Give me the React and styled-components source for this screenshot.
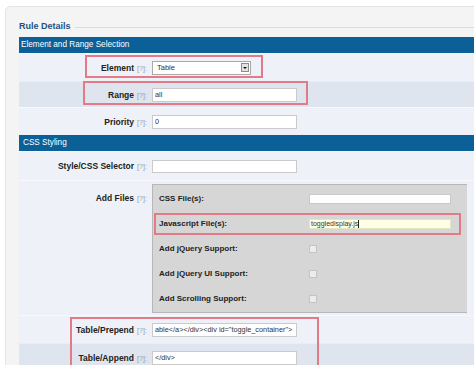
import React from "react"
import styled, { createGlobalStyle } from "styled-components"

const GlobalStyle = createGlobalStyle`
  html, body {
    margin: 0;
    padding: 0;
    background: #fff;
    overflow: hidden;
  }
  body {
    font-family: "Liberation Sans", Arial, sans-serif;
    color: #222;
  }
`

const Panel = styled.div`
  margin: 6px 0 0 5px;
  width: 500px;
  height: 420px;
  box-sizing: border-box;
  background: #f4f4f4;
  border: 1px solid #e4e4e4;
  border-radius: 5px;
  padding: 13px 0 0 13px;
`

const Legend = styled.div`
  display: flex;
  align-items: center;
  height: 12px;
  margin-bottom: 5px;

  span {
    font-size: 9px;
    font-weight: bold;
    color: #1f5282;
    padding-right: 4px;
    white-space: nowrap;
  }

  &::after {
    content: "";
    flex: 1;
    height: 1px;
    background: #dcdcdc;
    margin-top: 2px;
  }
`

const Fieldset = styled.div`
  display: flex;
  flex-direction: column;
`

const SectionHeader = styled.div`
  height: 16px;
  line-height: 16px;
  background: #0b6098;
  color: #fff;
  font-size: 8.2px;
  padding-left: ${p => p.$indent || 3}px;
  white-space: nowrap;
`

const Group = styled.div`
  position: relative;
`

const Row = styled.div`
  position: relative;
  display: grid;
  grid-template-columns: 128px 1fr;
  align-items: ${p => (p.$top ? "start" : "center")};
  height: ${p => p.$h}px;
  background: ${p => (p.$dark ? "#dee5ee" : "#eef2f8")};
  border-top: 1px solid ${p => (p.$dark ? "#e9eef5" : "#f6f8fb")};
  box-sizing: border-box;
`

const Label = styled.div`
  text-align: right;
  font-size: 8.5px;
  font-weight: bold;
  color: #222;
  white-space: nowrap;
  padding-top: ${p => p.$pad || 0}px;
`

const Help = styled.span`
  font-weight: normal;
  font-size: 7.2px;
  color: #9a9a9a;
  margin-left: 3px;
`

const Field = styled.div`
  display: flex;
  align-items: center;
  padding-left: 5px;
  padding-top: ${p => p.$pad || 0}px;
`

const TextInput = styled.input`
  width: ${p => p.$w || 145}px;
  height: ${p => p.$h || 14}px;
  box-sizing: border-box;
  margin: 0;
  padding: 0 2px;
  border: 1px solid #cacaca;
  background: #fff;
  font-family: "Liberation Sans", Arial, sans-serif;
  font-size: 7.3px;
  color: #333;
  outline: none;
`

const Select = styled.div`
  width: 99px;
  height: 14px;
  box-sizing: border-box;
  border: 1px solid #a9a9a9;
  background: #fff;
  display: flex;
  align-items: center;
  justify-content: space-between;
  padding: 0 1px 0 4px;
  font-size: 7.5px;
  color: #333;
`

const SelectButton = styled.div`
  width: 8px;
  height: 9px;
  box-sizing: border-box;
  border: 1px solid #8c8c8c;
  background: #e2e2e2;
  display: flex;
  align-items: center;
  justify-content: center;

  &::after {
    content: "";
    border-left: 2px solid transparent;
    border-right: 2px solid transparent;
    border-top: 2px solid #111;
  }
`

const FilesBox = styled.div`
  margin-top: 3px;
  width: 315px;
  height: 129px;
  box-sizing: border-box;
  background: #d6d6d6;
  border: 1px solid #b7b7b7;
  border-right: none;
  padding-top: 1px;
`

const FileRow = styled.div`
  position: relative;
  display: grid;
  grid-template-columns: 150px 1fr;
  align-items: center;
  height: 25px;
  padding-left: 6px;
`

const FileLabel = styled.div`
  font-size: 8px;
  font-weight: bold;
  color: #222;
  white-space: nowrap;
`

const Checkbox = styled.div`
  width: 8px;
  height: 8px;
  box-sizing: border-box;
  border: 1px solid #c4c4c4;
  background: #ececec;
`

const Highlight = styled.div`
  position: absolute;
  left: ${p => p.$x}px;
  top: ${p => p.$y}px;
  width: ${p => p.$w}px;
  height: ${p => p.$h}px;
  box-sizing: border-box;
  border: 2px solid #e37b86;
  pointer-events: none;
`

const Caret = styled.span`
  display: inline-block;
  width: 1px;
  height: 8px;
  background: #222;
`

const ActiveField = styled.div`
  display: flex;
  align-items: center;
  width: 142px;
  height: 10px;
  box-sizing: border-box;
  border: 1px solid #e4e4c8;
  background: #ffffe3;
  padding-left: 1px;
  font-size: 7px;
  color: #333;
`

const fileRows = [
  { label: "CSS File(s):", kind: "text" },
  { label: "Javascript File(s):", kind: "active" },
  { label: "Add jQuery Support:", kind: "check" },
  { label: "Add jQuery UI Support:", kind: "check" },
  { label: "Add Scrolling Support:", kind: "check" },
]

const HelpLabel = ({ children, pad }) => (
  <Label $pad={pad}>
    {children}
    <Help>[?]:</Help>
  </Label>
)

export default function App() {
  return (
    <>
      <GlobalStyle />
      <Panel>
        <Legend>
          <span>Rule Details</span>
        </Legend>
        <Fieldset>
          <SectionHeader $indent={2}>Element and Range Selection</SectionHeader>
          <Row $h={28}>
            <HelpLabel>Element</HelpLabel>
            <Field>
              <Select>
                Table
                <SelectButton />
              </Select>
            </Field>
            <Highlight $x={66} $y={1} $w={178} $h={23} />
          </Row>
          <Row $h={26} $dark>
            <HelpLabel>Range</HelpLabel>
            <Field>
              <TextInput readOnly value="all" />
            </Field>
            <Highlight $x={64} $y={-1} $w={225} $h={24} />
          </Row>
          <Row $h={28}>
            <HelpLabel>Priority</HelpLabel>
            <Field>
              <TextInput readOnly value="0" />
            </Field>
          </Row>

          <SectionHeader $indent={4}>CSS Styling</SectionHeader>
          <Row $h={29}>
            <HelpLabel>Style/CSS Selector</HelpLabel>
            <Field>
              <TextInput readOnly value="" $h={13} />
            </Field>
          </Row>
          <Row $h={135} $top>
            <HelpLabel pad={12}>Add Files</HelpLabel>
            <Field>
              <FilesBox>
                {fileRows.map(r => (
                  <FileRow key={r.label}>
                    <FileLabel>{r.label}</FileLabel>
                    {r.kind === "text" && (
                      <TextInput readOnly value="" $w={142} $h={10} />
                    )}
                    {r.kind === "active" && (
                      <ActiveField>
                        toggledisplay.js
                        <Caret />
                      </ActiveField>
                    )}
                    {r.kind === "check" && <Checkbox />}
                    {r.kind === "active" && (
                      <Highlight $x={1} $y={2} $w={307} $h={22} />
                    )}
                  </FileRow>
                ))}
              </FilesBox>
            </Field>
          </Row>
          <Group>
            <Row $h={28}>
              <HelpLabel>Table/Prepend</HelpLabel>
              <Field>
                <TextInput
                  readOnly
                  value={'able</a></div><div id="toggle_container">'}
                />
              </Field>
            </Row>
            <Row $h={28} $dark>
              <HelpLabel>Table/Append</HelpLabel>
              <Field>
                <TextInput readOnly value="</div>" />
              </Field>
            </Row>
            <Highlight $x={51} $y={2} $w={249} $h={60} />
          </Group>
        </Fieldset>
      </Panel>
    </>
  )
}
